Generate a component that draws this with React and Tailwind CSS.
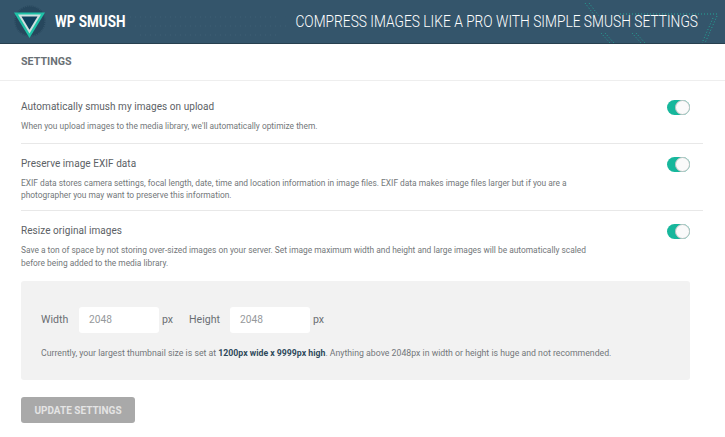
import React from "react";

// Small on/off switch, always on in this view
const Toggle = () => (
  <div className="relative w-[23px] h-[15px] rounded-full bg-[#17b79c] shrink-0">
    <div className="absolute right-0 top-0 w-[15px] h-[15px] rounded-full bg-[#fafafa] border border-[#c4c4c4]"></div>
  </div>
);

const Logo = () => (
  <svg width="32" height="36" viewBox="0 0 32 36" className="shrink-0">
    <circle cx="16" cy="17" r="15.5" fill="#27475d" />
    <circle cx="16" cy="17" r="15" fill="none" stroke="#3d5d72" strokeWidth="1" strokeDasharray="1 1" />
    <polygon points="0,8.6 31,8.6 15.5,34" fill="#1fc2a7" />
    <polygon points="4,10.6 27,10.6 15.5,29.6" fill="#cfe0df" />
    <polygon points="7.5,12.6 23.5,12.6 15.5,25.8" fill="#10405c" />
  </svg>
);

// Dotted accents in the banner
const Dots = () => (
  <svg width="725" height="43" viewBox="0 0 725 43" className="absolute left-0 top-0">
    <g stroke="#1fc2a7" strokeWidth="1" strokeDasharray="1 2" fill="none" opacity="0.75">
      <path d="M585 3 L595 16" />
      <path d="M589 3 L599 16" />
      <path d="M620 14 L717 14" />
      <path d="M601 33 L610 43" />
      <path d="M605 33 L614 43" />
      <path d="M632 33 L641 43" />
      <path d="M636 33 L645 43" />
      <path d="M717 16 L705 43" />
      <path d="M713 18 L702 43" />
    </g>
    <g stroke="#3f6077" strokeWidth="1" strokeDasharray="1 4" fill="none">
      <path d="M130 17 L280 17" />
      <path d="M135 26 L290 26" />
      <path d="M140 35 L280 35" />
    </g>
  </svg>
);

const Setting = ({ title, children, pb, border }) => (
  <div className={`flex justify-between pt-[13px] ${pb} ${border ? "border-b border-[#e8e8e8]" : ""}`}>
    <div className="w-[580px]">
      <h3 className="text-[10px] leading-[14px] tracking-[0.05px] text-[#5c6165]">{title}</h3>
      <p className="mt-[6px] text-[8.4px] leading-[12.5px] text-[#73777a]">{children}</p>
    </div>
    <div className="pr-[13px]">
      <Toggle />
    </div>
  </div>
);

export default function App() {
  return (
    <div className="w-[725px] h-[437px] overflow-hidden bg-white font-['Roboto',sans-serif]">
      {/* Banner */}
      <header className="relative h-[44px] bg-[#34556b] border-b border-[#27404f] flex items-center justify-between pl-[14px] pr-[27px]">
        <Dots />
        <div className="relative flex items-center gap-[9px]">
          <Logo />
          <span className="text-[16px] font-bold text-white scale-x-[0.84] origin-left whitespace-nowrap">WP SMUSH</span>
        </div>
        <span className="relative text-[17px] font-light text-white scale-x-[0.81] origin-right whitespace-nowrap">
          COMPRESS IMAGES LIKE A PRO WITH SIMPLE SMUSH SETTINGS
        </span>
      </header>

      {/* Section title */}
      <div className="h-[37px] border-b border-[#eeeeee] pl-[21px] flex items-center">
        <h2 className="text-[11.5px] font-bold text-[#6a7075] scale-x-[0.93] origin-left">SETTINGS</h2>
      </div>

      {/* Settings */}
      <div className="pl-[21px] pr-[22px] pt-[6px]">
        <Setting title="Automatically smush my images on upload" pb="pb-[10px]" border>
          When you upload images to the media library, we'll automatically optimize them.
        </Setting>
        <Setting title="Preserve image EXIF data" pb="pb-[8.5px]" border>
          EXIF data stores camera settings, focal length, date, time and location information in image files. EXIF data makes image files larger but if you are a photographer you may want to preserve this information.
        </Setting>
        <Setting title="Resize original images" pb="pb-0">
          Save a ton of space by not storing over-sized images on your server. Set image maximum width and height and large images will be automatically scaled before being added to the media library.
        </Setting>

        {/* Max dimensions box */}
        <div className="mt-[12px] w-[669px] h-[99px] rounded-[3px] bg-[#f2f2f2] pl-[20px] pt-[26px]">
          <div className="flex items-center text-[10.6px] text-[#6a6e72]">
            <span className="w-[38px]">Width</span>
            <div className="w-[80px] h-[26px] rounded-[3px] bg-white flex items-center pl-[10px] text-[10.2px] text-[#96999c]">2048</div>
            <span className="ml-[3px] w-[27px]">px</span>
            <span className="w-[41px]">Height</span>
            <div className="w-[80px] h-[26px] rounded-[3px] bg-white flex items-center pl-[10px] text-[10.2px] text-[#96999c]">2048</div>
            <span className="ml-[3px]">px</span>
          </div>
          <p className="mt-[14px] text-[8.72px] leading-[13px] text-[#73777a]">
            Currently, your largest thumbnail size is set at <b className="font-bold text-[#2f4a5c]">1200px wide x 9999px high</b>. Anything above 2048px in width or height is huge and not recommended.
          </p>
        </div>

        <button className="mt-[17px] block w-[114px] h-[26px] rounded-[3px] bg-[#a9a9a9] text-[10px] font-bold text-[#e4e4e4]">
          UPDATE SETTINGS
        </button>
      </div>
    </div>
  );
}
